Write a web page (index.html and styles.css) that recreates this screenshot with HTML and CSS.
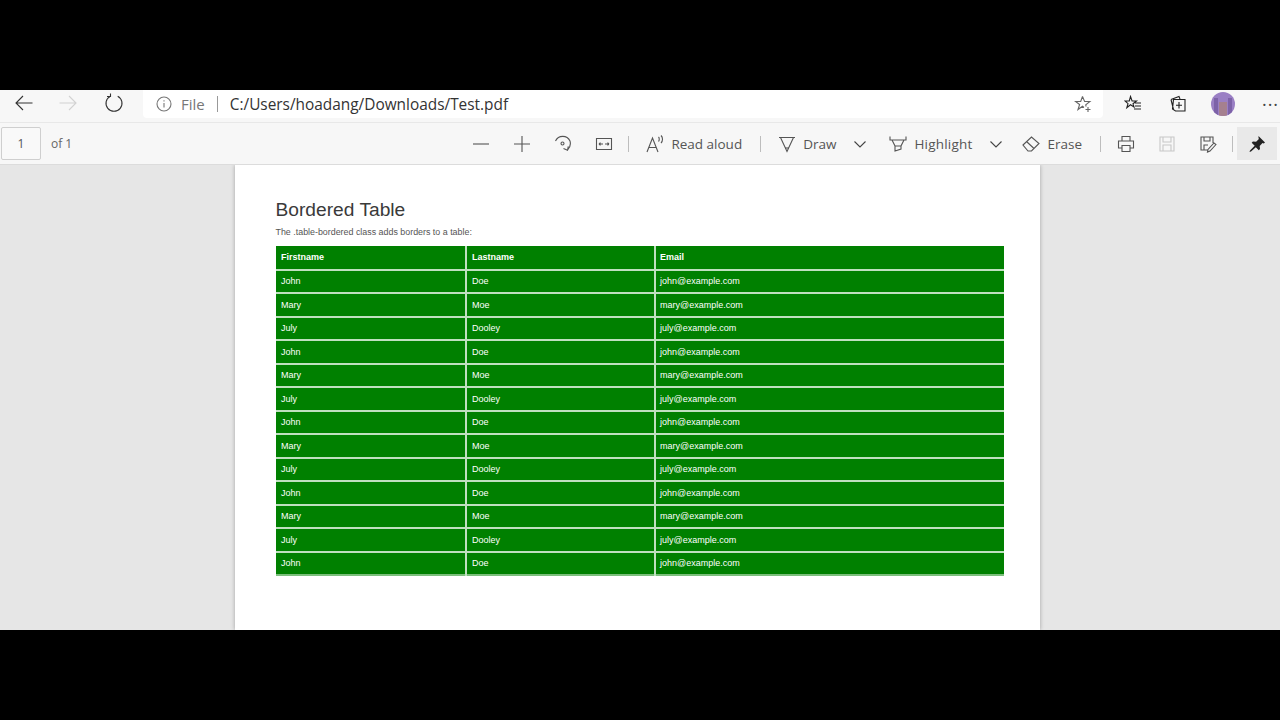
FILE: index.html
```html
<!DOCTYPE html>
<html lang="en">
<head>
<meta charset="utf-8">
<title>Test.pdf</title>
<link rel="stylesheet" href="styles.css">
</head>
<body>
<div class="letterbox-top"></div>
<header class="addressbar">
  <div class="nav">
    <button class="nav-btn back"><svg width="20" height="20" viewBox="0 0 20 20"><path d="M18.500 10H2M9 3l-7 7 7 7"/></svg></button>
    <button class="nav-btn forward"><svg width="20" height="20" viewBox="0 0 20 20"><path d="M1.500 10H18M11 3l7 7-7 7"/></svg></button>
    <button class="nav-btn refresh"><svg width="20" height="20" viewBox="0 0 20 20"><path d="M6.300 3.200A8 8 0 1 0 13.700 3.200M6.500 0.500v3h-3.500"/></svg></button>
  </div>
  <div class="omnibox">
    <svg class="info" width="16" height="16" viewBox="0 0 16 16"><circle cx="8" cy="8" r="7"/><path d="M8 7v4.500M8 4.300v1.300"/></svg>
    <span class="scheme">File</span>
    <span class="omni-sep"></span>
    <span class="url">C:/Users/hoadang/Downloads/Test.pdf</span>
    <svg class="star" width="18" height="18" viewBox="0 0 18 18"><path d="M8.500 1.500l2.100 5h5.300l-4.200 3.400 .5 1.600M10 12.500l-1.500-1.200-4.500 3.200 1.600-5L1.500 6.500h5.200L8.500 1.500M14 12v5M11.500 14.500h5"/></svg>
  </div>
  <div class="browser-tools">
    <button class="tool-btn"><svg width="18" height="18" viewBox="0 0 18 18"><path class="dark" d="M6.500 1.500l1.600 4.500h4.400l-3.500 2.800 1 3.200-3.500-2.200-3.700 3 1.200-4.200L1 6h4.300zM11 8h6M11 11h6M10 14h7"/></svg></button>
    <button class="tool-btn"><svg width="18" height="18" viewBox="0 0 18 18"><path class="dark" d="M2 4.500l8-3 1 2.500M4.500 4.500h11.500v11.500h-9.500l-3-2zM2 4.500l2.500 10M10 7v6.500M7 10.300h6"/></svg></button>
    <button class="tool-btn"><span class="avatar"><span class="avatar-tower side"></span><span class="avatar-tower"></span><span class="avatar-tower side"></span></span></button>
    <button class="tool-btn more">&#183;&#183;&#183;</button>
  </div>
</header>
<nav class="pdfbar">
  <div class="pager">
    <span class="page-input">1</span>
    <span class="page-of">of 1</span>
  </div>
  <div class="pdf-tools">
    <button class="slot"><svg width="18" height="18" viewBox="0 0 18 18"><path d="M1 9h16"/></svg></button>
    <button class="slot"><svg width="18" height="18" viewBox="0 0 18 18"><path d="M1 9h16M9 1v16"/></svg></button>
    <button class="slot"><svg width="18" height="18" viewBox="0 0 18 18"><path d="M1.500 6A8 8 0 0 1 16 6c1 3.500 0 6.500-2.500 9M9.500 13.500l4 1.800 .8-4"/><circle cx="8.500" cy="8.500" r="1.500"/></svg></button>
    <button class="slot"><svg width="18" height="18" viewBox="0 0 18 18"><path d="M1.500 3.500h15v11h-15zM4 9h4M4 9l1.500-1.300M4 9l1.500 1.300M10 9h4M14 9l-1.500-1.300M14 9l-1.500 1.300"/></svg></button>
    <span class="sep sep-a"></span>
    <button class="labelled read"><svg width="18" height="18" viewBox="0 0 18 18"><path d="M1 17L6.500 3l5.500 14M3 12.500h7M12.500 2c1 1 1 3.500 0 4.500M15 .500c2 2 2 5.500 0 7.500"/></svg><span>Read aloud</span></button>
    <span class="sep sep-b"></span>
    <button class="labelled draw"><svg width="18" height="18" viewBox="0 0 18 18"><path d="M1 2.500h16M2.500 2.500l6.500 14 6.500-14"/><path d="M7 13h4"/></svg><span>Draw</span></button>
    <button class="chev chev-draw"><svg width="14" height="14" viewBox="0 0 14 14"><path d="M1.500 4.500L7 10l5.500-5.500"/></svg></button>
    <button class="labelled highlight"><svg width="18" height="18" viewBox="0 0 18 18"><path d="M1 1.500v3.500h16v-3.500M3 5l3 6v5l6-2v-3l3-6M6 11h6"/></svg><span>Highlight</span></button>
    <button class="chev chev-highlight"><svg width="14" height="14" viewBox="0 0 14 14"><path d="M1.500 4.500L7 10l5.500-5.500"/></svg></button>
    <button class="labelled erase"><svg width="18" height="18" viewBox="0 0 18 18"><path d="M1 10l8.500-8 7.500 6.500-7.500 7.500H6zM4.500 6.500l7.500 7"/></svg><span>Erase</span></button>
    <span class="sep sep-c"></span>
    <button class="slot"><svg width="18" height="18" viewBox="0 0 18 18"><path d="M5 6V1.500h8V6M5 13H1.500V6h15v7H13M5 10.500h8v6H5z"/></svg></button>
    <button class="slot faded"><svg width="18" height="18" viewBox="0 0 18 18"><path d="M2 2h14v14H2zM5 2v5h8V2M5 16v-6h8v6"/></svg></button>
    <button class="slot"><svg width="18" height="18" viewBox="0 0 18 18"><path d="M9 15H2V2h12v6M5 2v4h6V2M5 15v-5h4M17 9.500L11 16l-2.500 1 .5-2.500 6-6.500z"/></svg></button>
    <span class="sep sep-d"></span>
    <button class="pin"><svg width="18" height="18" viewBox="0 0 18 18"><path class="solid" d="M10.500 1l6.500 6.500-1.200 1-1.300-.4-2.800 2.800.3 3.200-1.200 1.200-3-3L3 16.500l-1.500.5.500-1.500 4.700-4.800-3-3 1.200-1.200 3.200.3 2.800-2.800L10.500 3z"/></svg></button>
  </div>
</nav>
<main class="viewer">
  <article class="page">
    <h1>Bordered Table</h1>
    <p>The .table-bordered class adds borders to a table:</p>
    <table>
      <colgroup><col class="c1"><col class="c2"><col class="c3"></colgroup>
      <thead><tr><th>Firstname</th><th>Lastname</th><th>Email</th></tr></thead>
      <tbody>
        <tr><td>John</td><td>Doe</td><td>john@example.com</td></tr>
        <tr><td>Mary</td><td>Moe</td><td>mary@example.com</td></tr>
        <tr><td>July</td><td>Dooley</td><td>july@example.com</td></tr>
        <tr><td>John</td><td>Doe</td><td>john@example.com</td></tr>
        <tr><td>Mary</td><td>Moe</td><td>mary@example.com</td></tr>
        <tr><td>July</td><td>Dooley</td><td>july@example.com</td></tr>
        <tr><td>John</td><td>Doe</td><td>john@example.com</td></tr>
        <tr><td>Mary</td><td>Moe</td><td>mary@example.com</td></tr>
        <tr><td>July</td><td>Dooley</td><td>july@example.com</td></tr>
        <tr><td>John</td><td>Doe</td><td>john@example.com</td></tr>
        <tr><td>Mary</td><td>Moe</td><td>mary@example.com</td></tr>
        <tr><td>July</td><td>Dooley</td><td>july@example.com</td></tr>
        <tr><td>John</td><td>Doe</td><td>john@example.com</td></tr>
      </tbody>
    </table>
  </article>
</main>
<div class="letterbox-bottom"></div>
</body>
</html>
```
FILE: styles.css
```css
* { box-sizing: border-box; }
html, body { margin: 0; height: 720px; overflow: hidden; }
body { display: flex; flex-direction: column; background: #000; font-family: "Open Sans", "Noto Sans", sans-serif; }
button { background: none; border: 0; padding: 0; margin: 0; font: inherit; color: inherit; display: flex; align-items: center; justify-content: center; }
svg { display: block; fill: none; stroke: #555; stroke-width: 1.1; }
svg .dark { stroke: #222; }
svg .solid { fill: #222; stroke: none; }

.letterbox-top { height: 90px; flex: none; background: #000; }
.letterbox-bottom { height: 90px; flex: none; background: #000; }

.addressbar { height: 33px; flex: none; display: flex; align-items: flex-start; background: #f7f7f7; border-bottom: 1px solid #e8e8e8; }
.nav { width: 143px; height: 26px; flex: none; display: flex; align-items: center; }
.nav-btn { width: 20px; height: 24px; }
.back { margin-left: 14px; }
.back svg { stroke: #333; }
.forward { margin-left: 24px; }
.forward svg { stroke: #d2d2d2; }
.refresh { margin-left: 26px; }
.refresh svg { stroke: #333; }

.omnibox { width: 960px; height: 28px; flex: none; background: #fff; border-radius: 0 0 4px 4px; display: flex; align-items: center; padding-left: 13px; padding-right: 11px; }
.info { stroke: #777; }
.scheme { margin-left: 9px; font-size: 15px; color: #777; }
.omni-sep { width: 1px; height: 16px; background: #999; margin-left: 12px; }
.url { margin-left: 12px; font-size: 15.400px; color: #333; flex: 1; }
.star { stroke: #666; }

.browser-tools { flex: 1; height: 28px; display: flex; align-items: center; padding-left: 7px; }
.tool-btn { width: 45px; height: 28px; }
.avatar { width: 24px; height: 24px; border-radius: 50%; background: #9a7fc4; display: flex; align-items: flex-end; justify-content: center; gap: 1px; overflow: hidden; }
.avatar-tower { width: 8px; height: 14px; background: #a5808f; }
.avatar-tower.side { width: 4px; height: 18px; background: #7d62a8; }
.more { font-size: 18px; letter-spacing: 1px; color: #444; padding-left: 6px; }

.pdfbar { height: 42px; flex: none; display: flex; align-items: center; background: #f7f7f7; border-bottom: 1px solid #dcdcdc; padding-right: 3px; }
.pager { display: flex; align-items: center; padding-left: 1px; }
.page-input { width: 40px; height: 33px; border: 1px solid #cfcfcf; border-radius: 2px; background: #f9f9f9; display: flex; align-items: center; justify-content: center; font-size: 12px; color: #555; }
.page-of { margin-left: 10px; font-size: 12px; color: #666; }
.pdf-tools { margin-left: auto; display: flex; align-items: center; height: 41px; }
.slot { width: 41px; height: 34px; }
.faded svg { stroke: #c8c8c8; }
.sep { width: 1px; height: 16px; background: #bdbdbd; }
.sep-a { margin: 0 17px 0 4px; }
.sep-b { margin: 0 17px 0 18px; }
.sep-c { margin: 0 4px 0 18px; }
.sep-d { margin: 0 4px 0 4px; }
.labelled { display: flex; align-items: center; gap: 7px; font-size: 13.500px; color: #555; height: 34px; white-space: nowrap; }
.highlight { letter-spacing: .2px; }
.chev { width: 14px; height: 34px; }
.chev svg { stroke: #444; }
.chev-draw { margin: 0 22px 0 17px; }
.chev-highlight { margin: 0 19px 0 17px; }
.pin { width: 40px; height: 33px; background: #e9e9e9; }

.viewer { height: 465px; flex: none; background: #e6e6e6; display: flex; justify-content: center; overflow: hidden; }
.page { width: 805px; margin-right: 5px; background: #fff; box-shadow: 0 0 4px rgba(0,0,0,.3); padding: 34px 36px 0 41px; font-family: "Liberation Sans", Arial, sans-serif; }
h1 { margin: 0 0 0 -.5px; font-size: 19.200px; line-height: 22px; font-weight: 400; color: #3a3a3a; }
p { margin: 6px 0 0 -.5px; font-size: 8.900px; line-height: 11px; color: #555; }
table { margin: 8px 0 0 0; width: 728px; border-collapse: collapse; table-layout: fixed; background: #008000; color: #fff; font-size: 9px; border-bottom: 2px solid #7cbf7c; }
.c1 { width: 190px; }
.c2 { width: 189px; }
.c3 { width: 349px; }
th, td { height: 23.500px; padding: 0 0 0 5px; text-align: left; border: 2px solid #bfe0bf; border-top: 0; vertical-align: middle; }
th:first-child, td:first-child { border-left: 0; padding-left: 5px; }
th:last-child, td:last-child { border-right: 0; padding-left: 4px; }
tbody tr:last-child td { border-bottom: 0; }
```
